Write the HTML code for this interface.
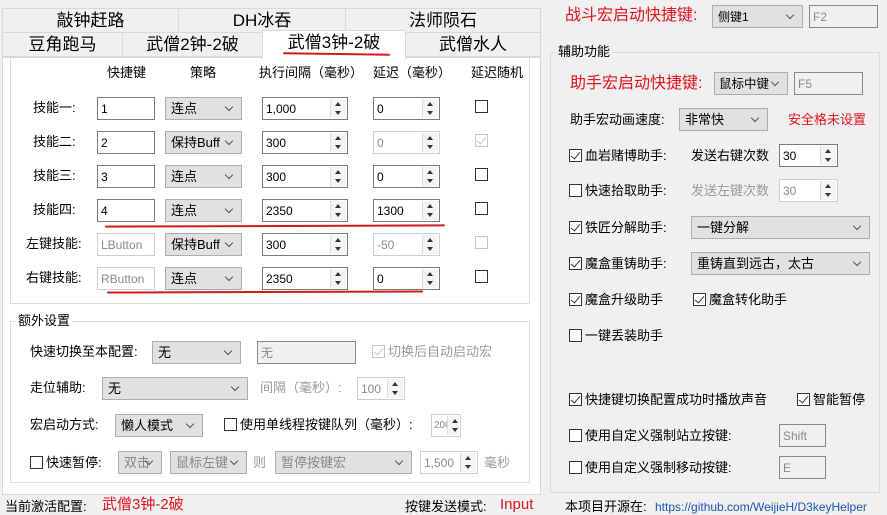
<!DOCTYPE html><html><head><meta charset="utf-8"><style>
*{box-sizing:border-box;margin:0;padding:0}
body{width:887px;height:511px;overflow:hidden;background:#f0f0f0;position:relative;font-family:"Liberation Sans","Noto Sans CJK SC",sans-serif;font-size:13px;color:#000}
.a{position:absolute;white-space:nowrap}
.t{position:absolute;white-space:nowrap;line-height:16px}
.in{position:absolute;height:23px;background:#fff;border:1px solid #7a7a7a;padding:3px 0 0 3px;font-size:12px;line-height:16px;overflow:hidden}
.dis{background:#fff;border-color:#cfcfcf;color:#8a8a8a}
.dd{position:absolute;height:23px;background:#e1e1e1;border:1px solid #adadad;padding:3px 0 0 5px;font-size:13px;line-height:16px}
.dd:after{content:"";position:absolute;right:9px;top:6px;width:5px;height:5px;border-right:1px solid #555;border-bottom:1px solid #555;transform:rotate(45deg)}
.dd.g{color:#888}
.sp{position:absolute;width:16px;top:1px;right:1px;bottom:1px;border-left:1px solid #ddd;background:#f4f4f4}
.sp:before{content:"";position:absolute;left:4px;top:3px;border:3.5px solid transparent;border-bottom:4px solid #333;border-top:0}
.sp:after{content:"";position:absolute;left:4px;bottom:3px;border:3.5px solid transparent;border-top:4px solid #333;border-bottom:0}
.cb{position:absolute;width:13px;height:13px;border:1px solid #333;background:#fff}
.cb.k:after{content:"";position:absolute;left:3px;top:0px;width:4px;height:8px;border-right:1.3px solid #333;border-bottom:1.3px solid #333;transform:rotate(40deg)}
.cb.gr{border-color:#c5c5c5}.cb.gr:after{border-color:#c5c5c5}
.red{color:#e0141e}
.gry{color:#9a9a9a}
.tab{position:absolute;height:25px;background:#f0f0f0;border:1px solid #d9d9d9;text-align:center;font-size:17px;line-height:24px}
.gb{position:absolute;border:1px solid #dcdcdc}
.ul{position:absolute;height:2px;background:#d21a1a;border-radius:1px}
</style></head><body>
<div class="a" style="left:2px;top:57px;width:539px;height:438px;background:#fff;border:1px solid #d9d9d9"></div>
<div class="tab" style="left:2px;top:8px;width:177px">敲钟赶路</div>
<div class="tab" style="left:178px;top:8px;width:168px">DH冰吞</div>
<div class="tab" style="left:345px;top:8px;width:196px">法师陨石</div>
<div class="tab" style="left:2px;top:32px;width:121px">豆角跑马</div>
<div class="tab" style="left:122px;top:32px;width:141px">武僧2钟-2破</div>
<div class="tab" style="left:262px;top:30px;width:144px;height:29px;background:#fff;border-bottom:none">武僧3钟-2破</div>
<div class="tab" style="left:405px;top:32px;width:136px">武僧水人</div>
<div class="ul" style="left:283px;top:53px;width:107px;transform:rotate(0.8deg)"></div>

<div class="gb" style="left:10px;top:57px;width:520px;height:247px;border-top:none"></div>
<div class="t" style="left:107px;top:65px">快捷键</div>
<div class="t" style="left:190px;top:65px">策略</div>
<div class="t" style="left:259px;top:65px">执行间隔（毫秒）</div>
<div class="t" style="left:373px;top:65px">延迟（毫秒）</div>
<div class="t" style="left:471px;top:65px">延迟随机</div>

<div class="t" style="left:33px;top:100px">技能一:</div>
<div class="in" style="left:97px;top:97px;width:58px">1</div>
<div class="dd" style="left:165px;top:97px;width:77px">连点</div>
<div class="in" style="left:262px;top:97px;width:86px">1,000<div class="sp"></div></div>
<div class="in" style="left:373px;top:97px;width:67px">0<div class="sp"></div></div>
<div class="cb" style="left:475px;top:100px"></div>

<div class="t" style="left:33px;top:134px">技能二:</div>
<div class="in" style="left:97px;top:131px;width:58px">2</div>
<div class="dd" style="left:165px;top:131px;width:77px">保持Buff</div>
<div class="in" style="left:262px;top:131px;width:86px">300<div class="sp"></div></div>
<div class="in dis" style="left:373px;top:131px;width:67px">0<div class="sp"></div></div>
<div class="cb k gr" style="left:475px;top:134px"></div>

<div class="t" style="left:33px;top:168px">技能三:</div>
<div class="in" style="left:97px;top:165px;width:58px">3</div>
<div class="dd" style="left:165px;top:165px;width:77px">连点</div>
<div class="in" style="left:262px;top:165px;width:86px">300<div class="sp"></div></div>
<div class="in" style="left:373px;top:165px;width:67px">0<div class="sp"></div></div>
<div class="cb" style="left:475px;top:168px"></div>

<div class="t" style="left:33px;top:202px">技能四:</div>
<div class="in" style="left:97px;top:199px;width:58px">4</div>
<div class="dd" style="left:165px;top:199px;width:77px">连点</div>
<div class="in" style="left:262px;top:199px;width:86px">2350<div class="sp"></div></div>
<div class="in" style="left:373px;top:199px;width:67px">1300<div class="sp"></div></div>
<div class="cb" style="left:475px;top:202px"></div>
<div class="ul" style="left:105px;top:225px;width:340px;transform:rotate(-0.2deg)"></div>

<div class="t" style="left:26px;top:236px">左键技能:</div>
<div class="in dis" style="left:97px;top:233px;width:58px">LButton</div>
<div class="dd" style="left:165px;top:233px;width:77px">保持Buff</div>
<div class="in" style="left:262px;top:233px;width:86px">300<div class="sp"></div></div>
<div class="in dis" style="left:373px;top:233px;width:67px">-50<div class="sp"></div></div>
<div class="cb gr" style="left:475px;top:236px"></div>

<div class="t" style="left:26px;top:270px">右键技能:</div>
<div class="in dis" style="left:97px;top:267px;width:58px">RButton</div>
<div class="dd" style="left:165px;top:267px;width:77px">连点</div>
<div class="in" style="left:262px;top:267px;width:86px">2350<div class="sp"></div></div>
<div class="in" style="left:373px;top:267px;width:67px">0<div class="sp"></div></div>
<div class="cb" style="left:475px;top:270px"></div>
<div class="ul" style="left:107px;top:291px;width:316px;transform:rotate(-0.2deg)"></div>

<div class="gb" style="left:10px;top:321px;width:520px;height:162px"></div>
<div class="t" style="left:16px;top:313px;background:#fff;padding:0 2px">额外设置</div>
<div class="t" style="left:30px;top:344px">快速切换至本配置:</div>
<div class="dd" style="left:152px;top:341px;width:89px">无</div>
<div class="in dis" style="left:257px;top:341px;width:99px;background:#f0f0f0;border-color:#888">无</div>
<div class="cb k gr" style="left:372px;top:345px"></div>
<div class="t gry" style="left:388px;top:344px">切换后自动启动宏</div>

<div class="t" style="left:30px;top:380px">走位辅助:</div>
<div class="dd" style="left:102px;top:377px;width:146px">无</div>
<div class="t gry" style="left:260px;top:380px">间隔（毫秒）:</div>
<div class="in dis" style="left:357px;top:377px;width:48px">100<div class="sp"></div></div>

<div class="t" style="left:30px;top:417px">宏启动方式:</div>
<div class="dd" style="left:115px;top:414px;width:88px">懒人模式</div>
<div class="cb" style="left:224px;top:418px"></div>
<div class="t" style="left:240px;top:417px">使用单线程按键队列（毫秒）:</div>
<div class="in dis" style="left:431px;top:414px;width:30px;font-size:10px;padding-left:2px">200<div class="sp" style="width:12px"></div></div>

<div class="cb" style="left:30px;top:456px"></div>
<div class="t" style="left:46px;top:455px">快速暂停:</div>
<div class="dd g" style="left:118px;top:451px;width:44px">双击</div>
<div class="dd g" style="left:170px;top:451px;width:77px">鼠标左键</div>
<div class="t gry" style="left:253px;top:455px">则</div>
<div class="dd g" style="left:275px;top:451px;width:137px">暂停按键宏</div>
<div class="in dis" style="left:420px;top:451px;width:58px">1,500<div class="sp"></div></div>
<div class="t gry" style="left:484px;top:455px">毫秒</div>

<div class="t red" style="left:565px;top:8px;font-size:16px">战斗宏启动快捷键:</div>
<div class="dd" style="left:712px;top:5px;width:91px;font-size:12px">侧键1</div>
<div class="in dis" style="left:809px;top:5px;width:69px;background:#f0f0f0;border-color:#888">F2</div>

<div class="gb" style="left:550px;top:52px;width:330px;height:441px"></div>
<div class="t" style="left:556px;top:44px;background:#f0f0f0;padding:0 2px">辅助功能</div>
<div class="t red" style="left:570px;top:76px;font-size:16px">助手宏启动快捷键:</div>
<div class="dd" style="left:714px;top:72px;width:74px;padding-left:4px;font-size:12.5px">鼠标中键</div>
<div class="in dis" style="left:794px;top:72px;width:69px;background:#f0f0f0;border-color:#888">F5</div>

<div class="t" style="left:570px;top:112px">助手宏动画速度:</div>
<div class="dd" style="left:679px;top:108px;width:89px">非常快</div>
<div class="t red" style="left:788px;top:112px">安全格未设置</div>

<div class="cb k" style="left:569px;top:149px"></div>
<div class="t" style="left:585px;top:148px">血岩赌博助手:</div>
<div class="t" style="left:691px;top:148px">发送右键次数</div>
<div class="in" style="left:779px;top:144px;width:59px">30<div class="sp"></div></div>

<div class="cb" style="left:569px;top:184px"></div>
<div class="t" style="left:585px;top:183px">快速拾取助手:</div>
<div class="t gry" style="left:691px;top:183px">发送左键次数</div>
<div class="in dis" style="left:779px;top:179px;width:59px">30<div class="sp"></div></div>

<div class="cb k" style="left:569px;top:221px"></div>
<div class="t" style="left:585px;top:220px">铁匠分解助手:</div>
<div class="dd" style="left:691px;top:216px;width:179px">一键分解</div>

<div class="cb k" style="left:569px;top:257px"></div>
<div class="t" style="left:585px;top:256px">魔盒重铸助手:</div>
<div class="dd" style="left:691px;top:252px;width:179px">重铸直到远古，太古</div>

<div class="cb k" style="left:569px;top:293px"></div>
<div class="t" style="left:585px;top:292px">魔盒升级助手</div>
<div class="cb k" style="left:693px;top:293px"></div>
<div class="t" style="left:709px;top:292px">魔盒转化助手</div>

<div class="cb" style="left:569px;top:329px"></div>
<div class="t" style="left:585px;top:328px">一键丢装助手</div>

<div class="cb k" style="left:569px;top:393px"></div>
<div class="t" style="left:585px;top:392px">快捷键切换配置成功时播放声音</div>
<div class="cb k" style="left:797px;top:393px"></div>
<div class="t" style="left:813px;top:392px">智能暂停</div>

<div class="cb" style="left:569px;top:429px"></div>
<div class="t" style="left:585px;top:428px">使用自定义强制站立按键:</div>
<div class="in dis" style="left:779px;top:424px;width:47px;background:#f0f0f0;border-color:#888">Shift</div>

<div class="cb" style="left:569px;top:461px"></div>
<div class="t" style="left:585px;top:460px">使用自定义强制移动按键:</div>
<div class="in dis" style="left:779px;top:456px;width:47px;background:#f0f0f0;border-color:#888">E</div>

<div class="t" style="left:5px;top:499px">当前激活配置:</div>
<div class="t red" style="left:102px;top:497px;font-size:15px">武僧3钟-2破</div>
<div class="t" style="left:405px;top:499px">按键发送模式:</div>
<div class="t red" style="left:500px;top:497px;font-size:15px">Input</div>
<div class="t" style="left:565px;top:499px">本项目开源在:</div>
<div class="t" style="left:655px;top:499px;color:#1a56b0;font-size:12px">https://github.com/WeijieH/D3keyHelper</div>
</body></html>
